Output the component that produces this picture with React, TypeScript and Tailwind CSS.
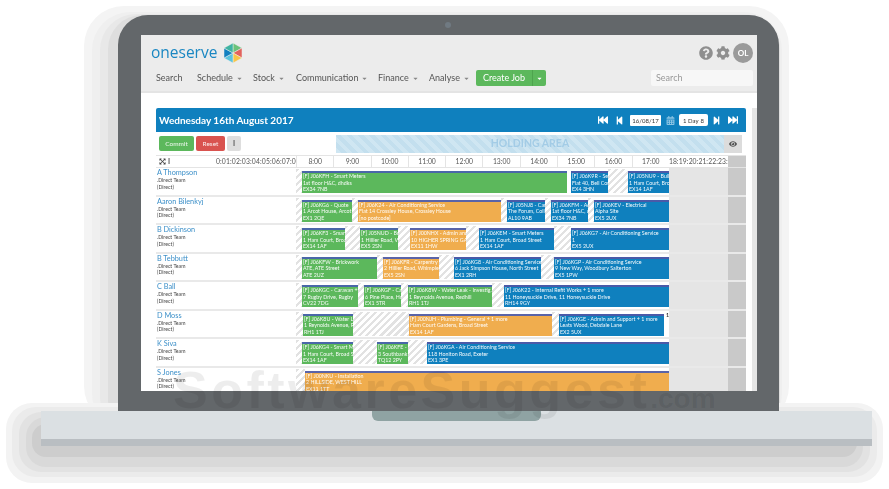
import { FaCog, FaQuestionCircle, FaCaretDown, FaFastBackward, FaFastForward, FaStepBackward, FaStepForward, FaCalendarAlt, FaExpandArrowsAlt, FaEye } from "react-icons/fa";

type Seg = { k: "s" | "g" | "o" | "b" | "w"; w: number; l?: string[] };
type Row = { name: string; segs: Seg[] };

const hours = ["8:00", "9:00", "10:00", "11:00", "12:00", "13:00", "14:00", "15:00", "16:00", "17:00"];
const early = ["0:0", "1:0", "2:0", "3:0", "4:0", "5:0", "6:0", "7:0"];
const late = ["18:", "19:", "20:", "21:", "22:", "23:"];

const rows: Row[] = [
  {
    name: "A Thompson",
    segs: [
      { k: "s", w: 6 },
      { k: "g", w: 265, l: ["[F] J06KFH - Smart Meters", "1st floor H&C, dhdks", "EX34 7NB"] },
      { k: "w", w: 4 },
      { k: "b", w: 37, l: ["[F] J06K9R - Sewer", "Flat 40, Bell Court", "EX4 3HN"] },
      { k: "s", w: 20 },
      { k: "b", w: 41, l: ["[F] J05NU9 - Building", "1 Ham Court, Broad", "EX14 1AF"] },
    ],
  },
  {
    name: "Aaron Bilenkyj",
    segs: [
      { k: "s", w: 6 },
      { k: "g", w: 50, l: ["[F] J06KG6 - Quote", "1 Arcot House, Arcot", "EX1 2QE"] },
      { k: "s", w: 6 },
      { k: "o", w: 143, l: ["[F] J06K24 - Air Conditioning Service", "Flat 14 Crossley House, Crossley House", "[no postcode]"] },
      { k: "s", w: 6 },
      { k: "b", w: 38, l: ["[F] J05NJ8 - Carpentry", "The Forum, Collier", "AL10 9AB"] },
      { k: "s", w: 6 },
      { k: "b", w: 37, l: ["[F] J06KFM - Admin", "1st floor H&C, dhdks", "EX34 7NB"] },
      { k: "s", w: 6 },
      { k: "b", w: 75, l: ["[F] J06KEV - Electrical", "Alpha Site", "EX5 2UX"] },
    ],
  },
  {
    name: "B Dickinson",
    segs: [
      { k: "s", w: 6 },
      { k: "g", w: 43, l: ["[F] J06KF3 - Smart Meters", "1 Ham Court, Broad", "EX14 1AF"] },
      { k: "s", w: 15 },
      { k: "g", w: 38, l: ["[F] J05NUD - Building", "1 Hillier Road, Whimple", "EX5 2SN"] },
      { k: "s", w: 12 },
      { k: "o", w: 56, l: ["[F] J00NHX - Admin and", "10 HIGHER SPRING GARDENS", "EX11 1HW"] },
      { k: "s", w: 13 },
      { k: "b", w: 75, l: ["[F] J06KEM - Smart Meters", "1 Ham Court, Broad Street", "EX14 1AF"] },
      { k: "s", w: 17 },
      { k: "b", w: 98, l: ["[F] J06KG7 - Air Conditioning Service", "1", "EX5 2UX"] },
    ],
  },
  {
    name: "B Tebbutt",
    segs: [
      { k: "s", w: 6 },
      { k: "g", w: 75, l: ["[F] J06KFW - Brickwork", "ATE, ATE Street", "ATE 2UZ"] },
      { k: "s", w: 6 },
      { k: "o", w: 56, l: ["[F] J06KFR - Carpentry", "2 Hillier Road, Whimple", "EX5 2SN"] },
      { k: "s", w: 15 },
      { k: "b", w: 87, l: ["[F] J06KG8 - Air Conditioning Service", "6 Jack Simpson House, North Street", "EX1 2RH"] },
      { k: "s", w: 13 },
      { k: "b", w: 115, l: ["[F] J06KGP - Air Conditioning Service", "9 New Way, Woodbury Salterton", "EX5 1PW"] },
    ],
  },
  {
    name: "C Ball",
    segs: [
      { k: "s", w: 6 },
      { k: "g", w: 56, l: ["[F] J06KGC - Caravan + 1 more", "7 Rugby Drive, Rugby", "CV22 7DG"] },
      { k: "s", w: 6 },
      { k: "g", w: 37, l: ["[F] J06KGF - Carpentry", "6 Pine Place, Honiton", "EX1 5TR"] },
      { k: "s", w: 7 },
      { k: "g", w: 84, l: ["[F] J06K8W - Water Leak - Investig.", "1 Reynolds Avenue, Redhill", "RH1 1TJ"] },
      { k: "s", w: 12 },
      { k: "b", w: 165, l: ["[F] J06K22 - Internal Refit Works + 1 more", "11 Honeysuckle Drive, 11 Honeysuckle Drive", "RH14 9GY"] },
    ],
  },
  {
    name: "D Moss",
    segs: [
      { k: "s", w: 7 },
      { k: "g", w: 50, l: ["[F] J06K8U - Water Leak", "1 Reynolds Avenue, Redhill", "RH1 1TJ"] },
      { k: "s", w: 56 },
      { k: "o", w: 143, l: ["[F] J00NJH - Plumbing - General + 1 more", "Ham Court Gardens, Broad Street", "EX14 1AF"] },
      { k: "s", w: 7 },
      { k: "b", w: 105, l: ["[F] J06KGE - Admin and Support + 1 more", "Leats Wood, Debdale Lane", "EX2 5UX"] },
      { k: "w", w: 5 },
    ],
  },
  {
    name: "K Siva",
    segs: [
      { k: "s", w: 6 },
      { k: "g", w: 51, l: ["[F] J06KG4 - Smart Meters", "1 Ham Court, Broad Street", "EX14 1AF"] },
      { k: "s", w: 24 },
      { k: "g", w: 31, l: ["[F] J06KFE - Carpentry", "3 Southbank", "TQ12 2PY"] },
      { k: "s", w: 19 },
      { k: "b", w: 242, l: ["[F] J06KGA - Air Conditioning Service", "118 Honiton Road, Exeter", "EX1 3PE"] },
    ],
  },
  {
    name: "S Jones",
    segs: [
      { k: "s", w: 9 },
      { k: "o", w: 364, l: ["[F] J00NKU - Installation", "2 HILLSIDE, WEST HILL", "EX11 1TT"] },
    ],
  },
];

const segClass = {
  s: "h-[24px] bg-[repeating-linear-gradient(135deg,#e2e2e2_0,#e2e2e2_2.5px,#ffffff_2.5px,#ffffff_5px)]",
  g: "mt-[2px] h-[22px] bg-[#5cb85c] border-t-2 border-[#4a67a8]",
  o: "mt-[2px] h-[22px] bg-[#f0ad4e] border-t-2 border-[#5a64a8]",
  b: "mt-[2px] h-[22px] bg-[#0f80be] border-t-2 border-[#4a5aa8]",
  w: "h-[24px] bg-white",
};

function Logo() {
  const pts = ["10,0", "19,5", "19,15", "10,20", "1,15", "1,5"];
  const fills = ["#6cc27a", "#e2625c", "#f7c548", "#5cc3dc", "#1180c0", "#3fb3a2"];
  return (
    <svg width="20" height="20" viewBox="0 0 20 20" className="ml-[6px]">
      {fills.map((f, i) => (
        <polygon key={f} points={`10,10 ${pts[i]} ${pts[(i + 1) % 6]}`} fill={f} stroke="#eee" strokeWidth="0.5" />
      ))}
    </svg>
  );
}

function NavItem({ label, w, caret = true }: { label: string; w: number; caret?: boolean }) {
  return (
    <div className="flex items-center text-[9px] text-[#555]" style={{ width: w }}>
      <span>{label}</span>
      {caret && <FaCaretDown className="ml-[3px] text-[7px] text-[#888]" />}
    </div>
  );
}

function Halo() {
  return (
    <svg className="absolute left-0 top-0" width="889" height="489" viewBox="0 0 889 489">
      <rect x="84" y="6" width="705" height="420" rx="40" fill="#f4f4f4" />
      <rect x="92" y="12" width="690" height="420" rx="38" fill="#efefef" />
      <rect x="100" y="14" width="680" height="420" rx="36" fill="#e8e8e8" />
      <rect x="108" y="15" width="672" height="420" rx="34" fill="#dedede" />
      <rect x="6" y="403" width="877" height="80" rx="26" fill="#f3f3f3" />
      <rect x="12" y="407" width="865" height="70" rx="24" fill="#ebebeb" />
      <rect x="19" y="412" width="851" height="60" rx="22" fill="#e2e2e2" />
      <rect x="26" y="417" width="837" height="50" rx="20" fill="#d9d9d9" />
      <rect x="32" y="424" width="825" height="33" rx="14" fill="#cdcdcd" />
    </svg>
  );
}

export default function App() {
  return (
    <div className="relative w-[889px] h-[489px] overflow-hidden bg-white font-['Lato',sans-serif]">
      <Halo />
      <div className="relative pt-[15px]">
        {/* laptop lid */}
        <div className="relative ml-[118px] w-[661px] h-[396px] rounded-t-[30px] bg-[#63676a] pt-[20px] pl-[23px]">
          <div className="absolute left-[327px] top-[7px] w-[6px] h-[6px] rounded-full bg-[#707a82]" />
          <div className="w-[616px] h-[356px] overflow-hidden bg-white blur-[0.35px]">
            {/* top nav */}
            <div className="h-[58px] bg-[#ececec] border-b-2 border-[#e4e4e4] pr-[4px]">
              <div className="flex h-[33px] items-center pl-[10px] pt-[2px]">
                <span className="text-[#1a87c2] text-[15.5px] leading-none font-['Open_Sans',sans-serif]">oneserve</span>
                <Logo />
                <div className="ml-auto flex items-center">
                  <FaQuestionCircle className="text-[14px] text-[#8f8f8f]" />
                  <FaCog className="ml-[3px] text-[14px] text-[#8f8f8f]" />
                  <div className="ml-[3px] flex h-[20px] w-[20px] items-center justify-center rounded-full bg-[#9a9a9a] text-[8px] font-bold text-white">OL</div>
                </div>
              </div>
              <div className="flex h-[19px] items-center pl-[15px] pt-[1px]">
                <NavItem label="Search" w={41} caret={false} />
                <NavItem label="Schedule" w={56} />
                <NavItem label="Stock" w={43} />
                <NavItem label="Communication" w={82} />
                <NavItem label="Finance" w={51} />
                <NavItem label="Analyse" w={47} />
                <div className="flex h-[16px] w-[70px] items-center rounded-[2px] bg-[#5cb85c] text-[9px] text-white">
                  <span className="flex-1 text-center">Create Job</span>
                  <span className="flex h-full w-[14px] items-center justify-center border-l border-[#4ea44e]">
                    <FaCaretDown className="text-[7px]" />
                  </span>
                </div>
                <div className="ml-[105px] flex h-[16px] w-[102px] items-center rounded-[2px] bg-[#f7f7f7] pl-[5px] text-[9px] text-[#999]">Search</div>
              </div>
            </div>

            <div className="flex pt-[15px] pl-[15px]">
              <div className="w-[590px] shrink-0">
                {/* blue title bar */}
                <div className="flex h-[24px] items-center rounded-t-[2px] bg-[#0f80be] pl-[3px] text-white">
                  <span className="text-[10px] font-bold">Wednesday 16th August 2017</span>
                  <div className="ml-auto flex items-center pr-[8px]">
                    <FaFastBackward className="text-[10px]" />
                    <FaStepBackward className="ml-[7px] text-[9px]" />
                    <div className="ml-[6px] flex h-[11px] w-[31px] items-center justify-center rounded-[1px] bg-white text-[6px] text-[#333]">16/08/17</div>
                    <FaCalendarAlt className="ml-[5px] text-[9px] text-[#8cc4e4]" />
                    <div className="ml-[4px] flex h-[12px] w-[29px] items-center justify-between rounded-[2px] bg-white px-[4px] text-[6px] text-[#333]">
                      <span>1 Day</span>
                      <span>8</span>
                    </div>
                    <FaStepForward className="ml-[4px] text-[9px]" />
                    <FaFastForward className="ml-[7px] text-[10px]" />
                  </div>
                </div>

                {/* commit bar */}
                <div className="flex h-[23px] items-center pl-[3px] pr-[4px]">
                  <div className="flex h-[15px] w-[35px] items-center justify-center rounded-[2px] bg-[#5cb85c] text-[6.5px] text-white/90">Commit</div>
                  <div className="ml-[2px] flex h-[15px] w-[29px] items-center justify-center rounded-[2px] bg-[#d9534f] text-[6.5px] text-white/90">Reset</div>
                  <div className="ml-[2px] flex h-[15px] w-[14px] items-center justify-center rounded-[2px] bg-[#dedede] text-[7px] font-bold text-[#555]">I</div>
                  <div className="ml-[95px] flex h-[18px] flex-1 items-center justify-center bg-[repeating-linear-gradient(45deg,#cfe6f2_0,#cfe6f2_4px,#c3dfee_4px,#c3dfee_8px)] text-[10.5px] font-bold text-[#a3cce6]">HOLDING AREA</div>
                  <div className="flex h-[18px] w-[18px] items-center justify-center bg-[#dcdcdc]">
                    <FaEye className="text-[8px] text-[#555]" />
                  </div>
                </div>

                {/* time header */}
                <div className="flex h-[13px] items-center border-y border-[#e4e4e4] text-[6.8px] text-[#555]">
                  <div className="flex w-[60px] items-center pl-[3px]">
                    <FaExpandArrowsAlt className="text-[7px] text-[#444]" />
                    <span className="ml-[2px] text-[7px] font-bold">I</span>
                  </div>
                  {early.map((h) => (
                    <div key={h} className="w-[10px] overflow-hidden whitespace-nowrap">{h}</div>
                  ))}
                  {hours.map((h) => (
                    <div key={h} className="w-[37.3px] border-l border-[#e4e4e4] text-center">{h}</div>
                  ))}
                  {late.map((h) => (
                    <div key={h} className="w-[9.83px] overflow-hidden whitespace-nowrap">{h}</div>
                  ))}
                  <div className="h-full flex-1 bg-[#c9c9c9]" />
                </div>

                {/* schedule rows */}
                {rows.map((r) => (
                  <div key={r.name} className="flex h-[28.5px] border-b-2 border-[#e9e9e9]">
                    <div className="w-[140px] shrink-0 bg-white pl-[1px] pt-[1px]">
                      <div className="text-[7.3px] leading-[8px] text-[#3d90c9]">{r.name}</div>
                      <div className="text-[5.2px] leading-[6.5px] text-[#444]">.Direct Team</div>
                      <div className="text-[5.2px] leading-[6.5px] text-[#444]">(Direct)</div>
                    </div>
                    <div className="flex w-[373px] shrink-0 pt-[1px]">
                      {r.segs.map((s, i) => (
                        <div
                          key={i}
                          className={`shrink-0 overflow-hidden whitespace-nowrap pl-[1px] text-[5.3px] leading-[6.5px] text-white/95 ${segClass[s.k]}`}
                          style={{ width: s.w }}
                        >
                          {s.l?.map((t, j) => (
                            <div key={j}>{t}</div>
                          ))}
                          {s.k === "w" && r.name === "D Moss" && <span className="ml-[1px] font-bold text-[#333]">1</span>}
                        </div>
                      ))}
                    </div>
                    <div className="w-[59px] shrink-0 bg-[#e5e5e5]" />
                    <div className="flex-1 bg-[#c9c9c9]" />
                  </div>
                ))}
              </div>
              <div className="ml-[6px] h-[300px] w-[5px] bg-[#e6e6e6]" />
            </div>
          </div>
        </div>

        {/* laptop base */}
        <div className="ml-[41px] h-[35px] w-[831px] border-b-[7px] border-[#b9bec2] bg-[#dbe0e3]">
          <div className="ml-[331px] h-[10px] w-[169px] rounded-b-[6px] bg-[#8fa3a3]" />
        </div>
      </div>

      {/* watermark */}
      <div className="pointer-events-none absolute left-[173px] top-[355px] flex items-baseline whitespace-nowrap font-['Liberation_Sans',sans-serif] font-bold text-black/[0.07]">
        <span className="text-[52px] leading-[70px] tracking-[3.5px]">SoftwareSuggest</span>
        <span className="text-[28px] leading-[70px]">.com</span>
      </div>
    </div>
  );
}
